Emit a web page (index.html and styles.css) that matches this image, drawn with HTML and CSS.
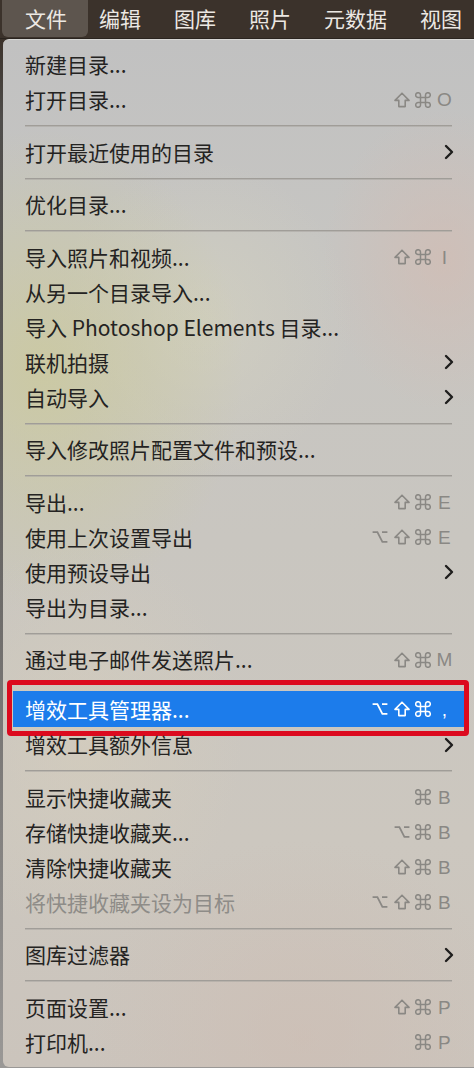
FILE: index.html
```html
<!DOCTYPE html>
<html lang="zh-CN">
<head>
<meta charset="utf-8">
<title>文件菜单</title>
<link rel="stylesheet" href="styles.css">
</head>
<body>
<svg class="defs" width="0" height="0" aria-hidden="true">
  <symbol id="shift" viewBox="0 0 16 16">
    <path d="M8 1.2 L15 8.4 H11.2 V14.6 H4.8 V8.4 H1 Z" fill="none" stroke="currentColor" stroke-width="1.6" stroke-linejoin="round"/>
  </symbol>
  <symbol id="cmd" viewBox="0 0 16 16">
    <path d="M5.5 5.5 H10.5 V10.5 H5.5 Z M5.5 5.5 V3.1 A2.4 2.4 0 1 0 3.1 5.5 H5.5 M10.5 5.5 V3.1 A2.4 2.4 0 1 1 12.9 5.5 H10.5 M10.5 10.5 H12.9 A2.4 2.4 0 1 1 10.5 12.9 V10.5 M5.5 10.5 V12.9 A2.4 2.4 0 1 1 3.1 10.5 H5.5" fill="none" stroke="currentColor" stroke-width="1.5"/>
  </symbol>
  <symbol id="opt" viewBox="0 0 16 16">
    <path d="M0.6 3.2 H5.4 L10.4 12.8 H15.4 M10 3.2 H15.4" fill="none" stroke="currentColor" stroke-width="1.8"/>
  </symbol>
  <symbol id="chev" viewBox="0 0 10 16">
    <path d="M2 2 L8 8 L2 14" fill="none" stroke="currentColor" stroke-width="2.4" stroke-linecap="round" stroke-linejoin="round"/>
  </symbol>
</svg>

<div class="menubar">
  <span class="mb-item active">文件</span>
  <span class="mb-item">编辑</span>
  <span class="mb-item">图库</span>
  <span class="mb-item">照片</span>
  <span class="mb-item">元数据</span>
  <span class="mb-item">视图</span>
</div>

<div class="menu">
  <div class="item"><span class="label">新建目录...</span></div>
  <div class="item"><span class="label">打开目录...</span>
    <span class="sc"><span class="k"><svg class="ic"><use href="#shift"/></svg></span><span class="k"><svg class="ic"><use href="#cmd"/></svg></span><span class="k key">O</span></span></div>
  <div class="sep"></div>
  <div class="item"><span class="label">打开最近使用的目录</span><svg class="chev"><use href="#chev"/></svg></div>
  <div class="sep"></div>
  <div class="item"><span class="label">优化目录...</span></div>
  <div class="sep"></div>
  <div class="item"><span class="label">导入照片和视频...</span>
    <span class="sc"><span class="k"><svg class="ic"><use href="#shift"/></svg></span><span class="k"><svg class="ic"><use href="#cmd"/></svg></span><span class="k key">I</span></span></div>
  <div class="item"><span class="label">从另一个目录导入...</span></div>
  <div class="item"><span class="label">导入 Photoshop Elements 目录...</span></div>
  <div class="item"><span class="label">联机拍摄</span><svg class="chev"><use href="#chev"/></svg></div>
  <div class="item"><span class="label">自动导入</span><svg class="chev"><use href="#chev"/></svg></div>
  <div class="sep"></div>
  <div class="item"><span class="label">导入修改照片配置文件和预设...</span></div>
  <div class="sep"></div>
  <div class="item"><span class="label">导出...</span>
    <span class="sc"><span class="k"><svg class="ic"><use href="#shift"/></svg></span><span class="k"><svg class="ic"><use href="#cmd"/></svg></span><span class="k key">E</span></span></div>
  <div class="item"><span class="label">使用上次设置导出</span>
    <span class="sc"><span class="k"><svg class="ic"><use href="#opt"/></svg></span><span class="k"><svg class="ic"><use href="#shift"/></svg></span><span class="k"><svg class="ic"><use href="#cmd"/></svg></span><span class="k key">E</span></span></div>
  <div class="item"><span class="label">使用预设导出</span><svg class="chev"><use href="#chev"/></svg></div>
  <div class="item"><span class="label">导出为目录...</span></div>
  <div class="sep"></div>
  <div class="item"><span class="label">通过电子邮件发送照片...</span>
    <span class="sc"><span class="k"><svg class="ic"><use href="#shift"/></svg></span><span class="k"><svg class="ic"><use href="#cmd"/></svg></span><span class="k key">M</span></span></div>
  <div class="item hl"><span class="label">增效工具管理器...</span>
    <span class="sc"><span class="k"><svg class="ic"><use href="#opt"/></svg></span><span class="k"><svg class="ic"><use href="#shift"/></svg></span><span class="k"><svg class="ic"><use href="#cmd"/></svg></span><span class="k key">,</span></span>
    <span class="redbox"></span></div>
  <div class="item"><span class="label">增效工具额外信息</span><svg class="chev"><use href="#chev"/></svg></div>
  <div class="sep"></div>
  <div class="item"><span class="label">显示快捷收藏夹</span>
    <span class="sc"><span class="k"><svg class="ic"><use href="#cmd"/></svg></span><span class="k key">B</span></span></div>
  <div class="item"><span class="label">存储快捷收藏夹...</span>
    <span class="sc"><span class="k"><svg class="ic"><use href="#opt"/></svg></span><span class="k"><svg class="ic"><use href="#cmd"/></svg></span><span class="k key">B</span></span></div>
  <div class="item"><span class="label">清除快捷收藏夹</span>
    <span class="sc"><span class="k"><svg class="ic"><use href="#shift"/></svg></span><span class="k"><svg class="ic"><use href="#cmd"/></svg></span><span class="k key">B</span></span></div>
  <div class="item disabled"><span class="label">将快捷收藏夹设为目标</span>
    <span class="sc"><span class="k"><svg class="ic"><use href="#opt"/></svg></span><span class="k"><svg class="ic"><use href="#shift"/></svg></span><span class="k"><svg class="ic"><use href="#cmd"/></svg></span><span class="k key">B</span></span></div>
  <div class="sep"></div>
  <div class="item"><span class="label">图库过滤器</span><svg class="chev"><use href="#chev"/></svg></div>
  <div class="sep"></div>
  <div class="item"><span class="label">页面设置...</span>
    <span class="sc"><span class="k"><svg class="ic"><use href="#shift"/></svg></span><span class="k"><svg class="ic"><use href="#cmd"/></svg></span><span class="k key">P</span></span></div>
  <div class="item"><span class="label">打印机...</span>
    <span class="sc"><span class="k"><svg class="ic"><use href="#cmd"/></svg></span><span class="k key">P</span></span></div>
</div>
</body>
</html>
```

FILE: styles.css
```css
* { box-sizing: border-box; }

html, body {
  margin: 0;
  padding: 0;
}

body {
  width: 474px;
  height: 1068px;
  overflow: hidden;
  background: linear-gradient(180deg, #3b322b 0, #3b322b 40px, #4f4d4b 120px, #5a5856 400px, #8a8886 900px, #9a9896 1068px);
  font-family: "Inter", "Noto Sans CJK SC", sans-serif;
  -webkit-font-smoothing: antialiased;
}

.defs {
  position: absolute;
  width: 0;
  height: 0;
  overflow: hidden;
}

/* ---------- menu bar ---------- */
.menubar {
  height: 39px;
  background: #3b322b;
  display: flex;
  align-items: flex-start;
  border-bottom: 1px solid #2a241f;
  overflow: hidden;
}

.mb-item {
  flex: none;
  height: 37px;
  display: flex;
  align-items: center;
  padding: 0 16.5px 1px;
  font-family: "Noto Sans CJK SC", sans-serif;
  font-size: 21px;
  color: #ece8e3;
  line-height: 1;
  white-space: nowrap;
}

.mb-item.active {
  margin-left: 2px;
  margin-right: -5.5px;
  padding: 0 21px 1px 23px;
  background: #5d554e;
  border-radius: 0 0 6px 6px;
}

/* ---------- dropdown ---------- */
.menu {
  margin-left: 3px;
  height: 1028px;
  padding-top: 7px;
  border-radius: 6px 0 0 6px;
  border-top: 1px solid #d6d6d4;
  display: flex;
  flex-direction: column;
  background:
    radial-gradient(ellipse 200px 240px at 40px 330px, rgba(204, 202, 156, 0.8), rgba(204, 202, 156, 0) 100%),
    radial-gradient(ellipse 150px 160px at 200px 280px, rgba(214, 212, 190, 0.55), rgba(214, 212, 190, 0) 100%),
    radial-gradient(ellipse 120px 150px at 440px 220px, rgba(212, 186, 176, 0.6), rgba(212, 186, 176, 0) 100%),
    radial-gradient(ellipse 160px 200px at 80px 700px, rgba(214, 206, 188, 0.6), rgba(214, 206, 188, 0) 100%),
    radial-gradient(ellipse 220px 200px at 300px 1000px, rgba(206, 188, 178, 0.55), rgba(206, 188, 178, 0) 100%),
    linear-gradient(180deg, #c1c1c1 0, #c6c5c2 200px, #c9c6c0 500px, #ccc7bf 800px, #cbc4bc 1028px);
}

.item {
  position: relative;
  flex: none;
  height: 35px;
  display: flex;
  align-items: center;
  justify-content: space-between;
  padding: 0 19px 0 22px;
  font-family: "Inter", "Noto Sans CJK SC", sans-serif;
  font-size: 21px;
  color: #242322;
  line-height: 1;
}

.label {
  white-space: nowrap;
  font-family: "Noto Sans CJK SC", sans-serif;
}

.sep {
  flex: none;
  height: 17.5px;
  display: flex;
  align-items: center;
  padding: 0 22px;
}

.sep::after {
  content: "";
  display: block;
  width: 100%;
  height: 1px;
  background: #a09d98;
  box-shadow: 0 1px 0 rgba(170, 167, 162, 0.6);
}

.sc {
  display: flex;
  align-items: center;
  color: #8a8884;
}

.k {
  width: 21.3px;
  height: 20px;
  display: flex;
  align-items: center;
  justify-content: center;
}

.ic {
  width: 16px;
  height: 16px;
}

.key {
  font-family: "Liberation Sans", sans-serif;
  font-size: 19px;
  line-height: 1;
}

.chev {
  width: 10px;
  height: 16px;
  margin-right: 1px;
  color: #1f1e1d;
}

.item.disabled .label {
  color: #8e8c88;
}

/* highlighted row */
.item.hl {
  margin: 14px 10px 0;
  height: 36px;
  padding: 0 9px 0 12px;
  background: #1c7ceb;
  color: #ffffff;
}

.item.hl .sc {
  color: #ffffff;
}

.redbox {
  position: absolute;
  left: -6px;
  right: -5px;
  top: -11px;
  bottom: -9px;
  border: 5px solid #dc0a1e;
  border-radius: 4px;
  pointer-events: none;
}
```
